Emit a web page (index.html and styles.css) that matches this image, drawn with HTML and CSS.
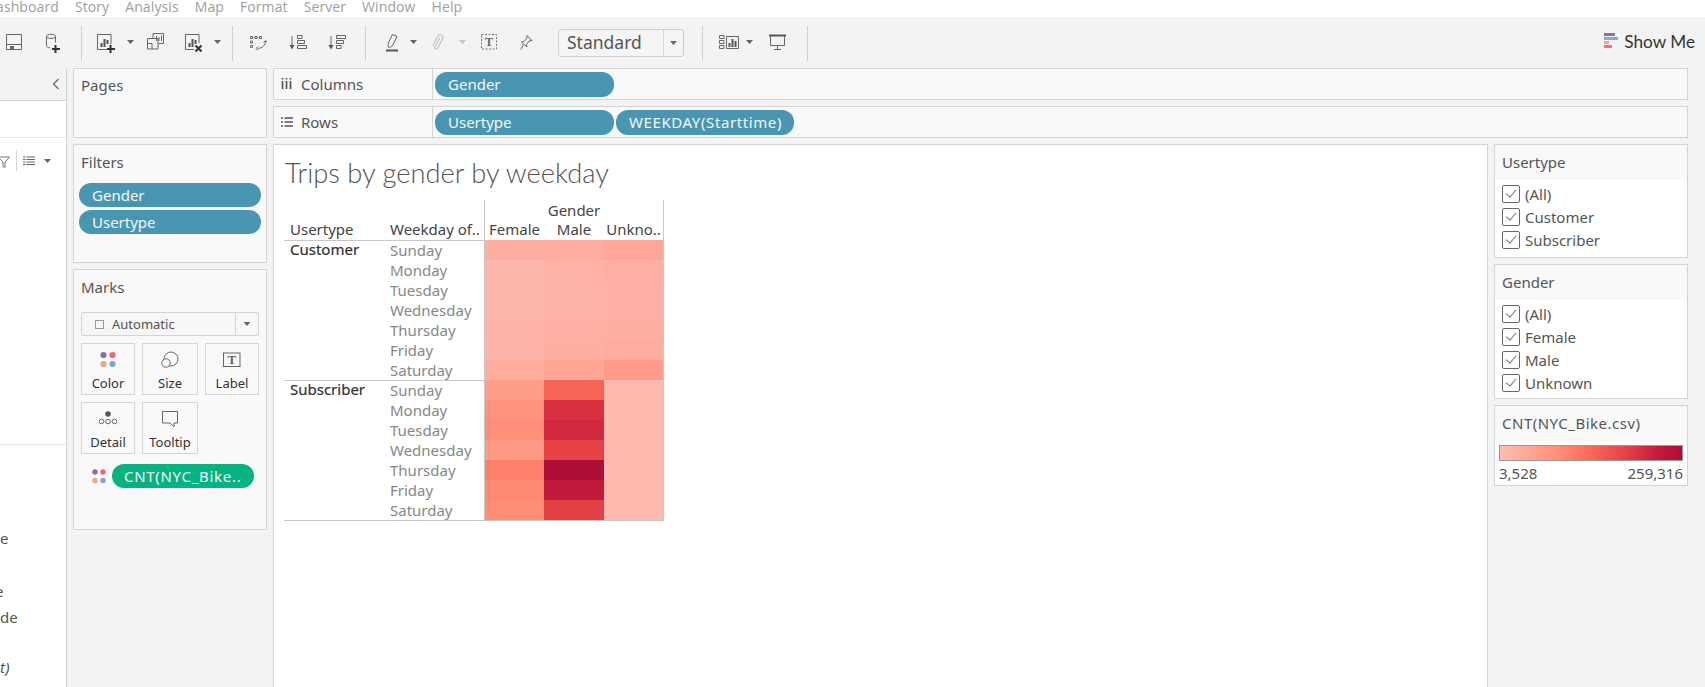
FILE: index.html
```html
<!DOCTYPE html>
<html lang="en">
<head>
<meta charset="utf-8">
<title>Trips by gender by weekday</title>
<link rel="stylesheet" href="styles.css">
</head>
<body>
<nav class="menu">
  <span class="m-dash">ashboard</span><span>Story</span><span>Analysis</span><span>Map</span><span>Format</span><span>Server</span><span>Window</span><span>Help</span>
</nav>
<header class="toolbar">
  <svg class="t-save" width="16" height="24" viewBox="0 0 16 24"><path d="M.5 4.500h15v15H.5zM.5 14.500h15" class="s"/><rect x="4" y="16" width="4" height="3.500" fill="#666"/></svg>
  <svg class="t-data" width="14" height="24" viewBox="0 0 14 24"><path d="M.5 6.500c0-3 9-3 9 0v6M.5 6.500c0 2.600 9 2.600 9 0M.5 6.500v9c0 1.600 2 2.200 3.500 2.400" class="s"/><path d="M9.500 15v8M6 19h8" class="p"/></svg>
  <i class="sep t-m21"></i>
  <svg class="t-new" width="18" height="24" viewBox="0 0 18 24"><path d="M10 19.500H.5v-15h13.500V14" class="s"/><path d="M4.500 17v-4M7.500 17V9M10.500 14v-4" class="b"/><path d="M13.500 15v8M10 19h8" class="p"/></svg>
  <i class="caret t-m12"></i>
  <svg class="t-dup" width="17" height="24" viewBox="0 0 17 24"><path d="M.5 8.500h10.500v10.500H.5zM.5 13.500h4.500v5.500M6 8V3.500h10.500v10h-5" class="s"/><path d="M9.500 11V6M12 11V7M14.500 11V5.500" class="s"/></svg>
  <svg class="t-clear" width="19" height="24" viewBox="0 0 19 24"><path d="M10 19.500H1.500v-15h13.500V13" class="s"/><path d="M5.500 17v-4M8.500 17V9M11.500 14v-4" class="b"/><path d="M11.500 15.500l6 6M17.500 15.500l-6 6" class="p"/></svg>
  <i class="caret t-m11"></i>
  <i class="sep t-m11"></i>
  <svg class="t-swap" width="17" height="24" viewBox="0 0 17 24"><path d="M.5 6.500h2v2h-2zM5 6.500h2v2H5zM9.500 6.500h2v2h-2zM.5 11h2v2h-2zM.5 15.500h2v2h-2z" class="s"/><path d="M15.500 11c0 4-3 7-7.500 7.500M13.500 12.500l2-2 1.500 2M8 16.500l-2 2 2 1.500" class="s"/></svg>
  <svg class="t-sorta" width="18" height="24" viewBox="0 0 18 24"><path d="M3 6v12" class="s"/><path d="M.5 15h5L3 19.500z" fill="#555"/><path d="M8.500 5.500h4.500v3H8.500zM8.500 10.500h7v3h-7zM8.500 15.500h9v3h-9z" class="s"/></svg>
  <svg class="t-sortd" width="18" height="24" viewBox="0 0 18 24"><path d="M3 6v12" class="s"/><path d="M.5 15h5L3 19.500z" fill="#555"/><path d="M8.500 5.500h9v3h-9zM8.500 10.500h7v3h-7zM8.500 15.500h4.500v3H8.500z" class="s"/></svg>
  <i class="sep t-m19"></i>
  <svg class="t-high" width="13" height="24" viewBox="0 0 13 24"><path d="M6.500 4.500l4.500 2-4.500 9-3 2-1.500-.8.300-3.500z" class="s"/><path d="M0 20.500h12" stroke="#555" stroke-width="2"/></svg>
  <i class="caret t-m11"></i>
  <svg class="t-clip" width="13" height="24" viewBox="0 0 13 24"><path d="M9 7.500l-5 9c-1 2 1.500 3.500 2.700 1.600l4.800-9c1.800-3.500-3-6-4.800-2.600l-5 9.200" fill="none" stroke="#c6c6c6" stroke-width="1.300"/></svg>
  <i class="caret caret-off t-m15"></i>
  <svg class="t-text" width="16" height="24" viewBox="0 0 16 24"><rect x=".5" y="4.500" width="15" height="14.500" fill="none" stroke="#777" stroke-dasharray="2 1.500"/><text x="8" y="16" class="tt">T</text></svg>
  <svg class="t-pin" width="13" height="24" viewBox="0 0 13 24"><path d="M7 5.500l5 5-3 .5-2.500 3.500.5 2.500-5.500-5 2.500-.5 3-3.500zM3.500 14.500L.8 19.500" class="s"/></svg>
  <div class="select"><span class="select-label">Standard</span><span class="select-arrow"><i class="caret"></i></span></div>
  <i class="sep t-m18"></i>
  <svg class="t-chart" width="20" height="24" viewBox="0 0 20 24"><path d="M.5 5.500h4.500v3H.5zM.5 10.500h4.500v3H.5zM.5 15.500h4.500v3H.5zM7.500 6.500h12v12h-12z" class="s"/><path d="M10.500 17v-4M13.500 17V9M16.500 17v-6" class="b"/></svg>
  <i class="caret t-m7"></i>
  <svg class="t-pres" width="17" height="24" viewBox="0 0 17 24"><path d="M0 5.500h17" stroke="#555" stroke-width="2"/><path d="M1.500 6v9.500h14V6M8.500 15.500v3.500M5 19.500h7" class="s"/></svg>
  <i class="sep t-m21"></i>
  <div class="showme">
    <svg width="14" height="16" viewBox="0 0 14 16"><rect width="11" height="3" fill="#8a7199"/><rect y="4" width="14" height="3" fill="#8aa9d0"/><rect y="8" width="5" height="3" fill="#f4a67c"/><rect y="12" width="8" height="3" fill="#f4707f"/></svg>
    <span>Show Me</span>
  </div>
</header>
<main class="main">
  <aside class="data">
    <div class="data-head"><svg width="8" height="12" viewBox="0 0 8 12"><path d="M6.500 1L1.500 6l5 5" fill="none" stroke="#666" stroke-width="1.200"/></svg></div>
    <div class="data-blank"></div>
    <div class="data-tools">
      <svg class="d-filter" width="10" height="12" viewBox="0 0 10 12"><path d="M-2 1h11.500L5 6v5.500L3 10.500V6z" fill="none" stroke="#777"/></svg>
      <i class="d-sep"></i>
      <svg class="d-list" width="12" height="10" viewBox="0 0 12 10"><path d="M0 1h2.500M3.500 1H12M0 3.500h2.500M3.500 3.500H12M0 6h2.500M3.500 6H12M0 8.500h2.500M3.500 8.500H12" stroke="#666"/></svg>
      <i class="caret d-caret"></i>
    </div>
    <div class="data-lower">
      <div class="frag frag-1">e</div>
      <div class="frag frag-2"><span>e</span></div>
      <div class="frag frag-3">de</div>
      <div class="frag frag-4">t)</div>
    </div>
  </aside>
  <section class="shelves">
    <div class="card pages"><h2 class="card-title">Pages</h2></div>
    <div class="card filters">
      <h2 class="card-title">Filters</h2>
      <div class="pill pill-wide">Gender</div>
      <div class="pill pill-wide">Usertype</div>
    </div>
    <div class="card marks">
      <h2 class="card-title">Marks</h2>
      <div class="marks-select"><span class="auto"><i class="auto-box"></i>Automatic</span><span class="marks-arrow"><i class="caret"></i></span></div>
      <div class="marks-grid">
        <div class="mark"><svg width="20" height="20" viewBox="0 0 20 20"><circle cx="5.500" cy="5" r="3.100" fill="#86709d"/><circle cx="14.500" cy="5" r="3.100" fill="#f2657d"/><circle cx="5.500" cy="14" r="3.100" fill="#f3a67e"/><circle cx="14.500" cy="14" r="3.100" fill="#7ea4d2"/></svg><span>Color</span></div>
        <div class="mark"><svg width="20" height="20" viewBox="0 0 20 20"><circle cx="11" cy="9" r="7" fill="none" stroke="#666"/><circle cx="6" cy="13" r="4.200" fill="#fafafa" stroke="#666"/></svg><span>Size</span></div>
        <div class="mark"><svg width="20" height="20" viewBox="0 0 20 20"><rect x="1.500" y="3" width="16.500" height="13.500" fill="none" stroke="#666"/><text x="9.750" y="14" class="tt tt-b">T</text></svg><span>Label</span></div>
        <div class="mark"><svg width="20" height="20" viewBox="0 0 20 20"><circle cx="10" cy="5" r="2.800" fill="#555"/><circle cx="3.500" cy="12.500" r="2.300" fill="none" stroke="#666"/><circle cx="10" cy="12.500" r="2.300" fill="none" stroke="#666"/><circle cx="16.500" cy="12.500" r="2.300" fill="none" stroke="#666"/></svg><span>Detail</span></div>
        <div class="mark"><svg width="20" height="20" viewBox="0 0 20 20"><path d="M2.500 2.500h15v11.500h-3.500v4l-4-4h-7.500z" fill="none" stroke="#666" stroke-linejoin="round"/></svg><span>Tooltip</span></div>
      </div>
      <div class="mark-pill-row">
        <svg width="15" height="15" viewBox="0 0 15 15"><circle cx="3" cy="3" r="2.700" fill="#86709d"/><circle cx="11" cy="3" r="2.700" fill="#f2657d"/><circle cx="3" cy="11.500" r="2.700" fill="#f3a67e"/><circle cx="11" cy="11.500" r="2.700" fill="#7ea4d2"/></svg>
        <div class="pill pill-green">CNT(NYC_Bike..</div>
      </div>
    </div>
  </section>
  <section class="work">
    <div class="card shelf">
      <div class="shelf-label"><svg width="12" height="12" viewBox="0 0 12 12"><path d="M1.500 3v8M5.500 3v8M9.500 3v8" stroke="#555" stroke-width="1.700"/><path d="M1.500 0v1.500M5.500 0v1.500M9.500 0v1.500" stroke="#555" stroke-width="1.700"/></svg><span>Columns</span></div>
      <div class="pill pill-shelf">Gender</div>
    </div>
    <div class="card shelf">
      <div class="shelf-label"><svg width="12" height="12" viewBox="0 0 12 12"><path d="M0 2h2M3.500 2H12M0 6h2M3.500 6H12M0 10h2M3.500 10H12" stroke="#555" stroke-width="1.500"/></svg><span>Rows</span></div>
      <div class="pill pill-shelf">Usertype</div>
      <div class="pill pill-shelf pill-caps">WEEKDAY(Starttime)</div>
    </div>
    <div class="work-lower">
      <div class="viz">
        <h1 class="viz-title">Trips by gender by weekday</h1>
        <div class="table">
          <div class="th"></div><div class="th"></div><div class="th th-gender">Gender</div>
          <div class="th th-line">Usertype</div><div class="th th-line">Weekday of..</div><div class="th th-row ctr vl">Female</div><div class="th th-row ctr">Male</div><div class="th th-row ctr vr">Unkno..</div>

          <div class="group">Customer</div>
          <div class="day day-first">Sunday</div><div class="c vl c1"></div><div class="c c2"></div><div class="c vr c3"></div>
          <div class="day">Monday</div><div class="c vl c4"></div><div class="c c5"></div><div class="c vr c6"></div>
          <div class="day">Tuesday</div><div class="c vl c4"></div><div class="c c5"></div><div class="c vr c7"></div>
          <div class="day">Wednesday</div><div class="c vl c4"></div><div class="c c8"></div><div class="c vr c7"></div>
          <div class="day">Thursday</div><div class="c vl c8"></div><div class="c c6"></div><div class="c vr c1"></div>
          <div class="day">Friday</div><div class="c vl c9"></div><div class="c c1"></div><div class="c vr c2"></div>
          <div class="day">Saturday</div><div class="c vl c10"></div><div class="c c11"></div><div class="c vr c12"></div>

          <div class="group">Subscriber</div>
          <div class="day day-first">Sunday</div><div class="c vl c13"></div><div class="c c14"></div><div class="c vr c15"></div>
          <div class="day">Monday</div><div class="c vl c16"></div><div class="c c17"></div><div class="c vr c15"></div>
          <div class="day">Tuesday</div><div class="c vl c18"></div><div class="c c19"></div><div class="c vr c15"></div>
          <div class="day">Wednesday</div><div class="c vl c20"></div><div class="c c21"></div><div class="c vr c15"></div>
          <div class="day">Thursday</div><div class="c vl c22"></div><div class="c c23"></div><div class="c vr c15"></div>
          <div class="day">Friday</div><div class="c vl c24"></div><div class="c c25"></div><div class="c vr c15"></div>
          <div class="day">Saturday</div><div class="c vl c26"></div><div class="c c27"></div><div class="c vr c15"></div>
        </div>
      </div>
      <aside class="legends">
        <div class="card qf qf-user">
          <h2 class="qf-title">Usertype</h2>
          <ul class="qf-list">
            <li><i class="check"></i>(All)</li>
            <li><i class="check"></i>Customer</li>
            <li><i class="check"></i>Subscriber</li>
          </ul>
        </div>
        <div class="card qf qf-gender">
          <h2 class="qf-title">Gender</h2>
          <ul class="qf-list">
            <li><i class="check"></i>(All)</li>
            <li><i class="check"></i>Female</li>
            <li><i class="check"></i>Male</li>
            <li><i class="check"></i>Unknown</li>
          </ul>
        </div>
        <div class="card qf qf-legend">
          <h2 class="qf-title qf-caps">CNT(NYC_Bike.csv)</h2>
          <div class="legend-body">
            <div class="ramp"></div>
            <div class="ramp-labels"><span>3,528</span><span>259,316</span></div>
          </div>
        </div>
      </aside>
    </div>
  </section>
</main>
</body>
</html>
```
FILE: styles.css
```css
* { box-sizing: border-box; }
html, body { margin: 0; height: 687px; overflow: hidden; }
body { background: #f3f3f3; font-family: "Noto Sans", "Liberation Sans", sans-serif; font-size: 15px; color: #555; }
i { display: block; font-style: normal; }
h1, h2, ul { margin: 0; padding: 0; font-weight: 400; }
ul { list-style: none; }

/* menu */
.menu { height: 17px; background: #fff; display: flex; gap: 16px; overflow: hidden; font-family: "Open Sans", sans-serif; font-size: 14px; line-height: 13px; letter-spacing: .1px; color: #a0a0a0; white-space: nowrap; }
.m-dash { margin-left: -4px; }

/* toolbar */
.toolbar { height: 51px; background: #f3f3f3; display: flex; align-items: flex-start; padding-top: 13px; padding-right: 10px; }
.toolbar svg { flex: none; display: block; }
.s { fill: none; stroke: #666; stroke-width: 1; }
.b { fill: none; stroke: #555; stroke-width: 2; }
.p { fill: none; stroke: #333; stroke-width: 2; }
.tt { font-family: "Liberation Serif", serif; font-size: 12px; font-weight: 700; fill: #666; text-anchor: middle; }
.tt-b { font-size: 13px; }
.sep { flex: none; width: 1px; height: 35px; background: #cfcfcf; margin-top: -4px; }
.caret { flex: none; width: 7px; height: 4px; background: #666; clip-path: polygon(0 0, 100% 0, 50% 100%); }
.toolbar > .caret { margin-top: 10px; }
.caret-off { background: #c6c6c6; }
.t-save { margin-left: 6px; } .t-data { margin-left: 24px; }
.t-new { margin-left: 15px; } .t-dup { margin-left: 13px; }
.t-clear { margin-left: 20px; } .t-swap { margin-left: 17px; }
.t-sorta { margin-left: 22px; } .t-sortd { margin-left: 21px; }
.t-high { margin-left: 20px; } .t-clip { margin-left: 14px; }
.t-text { margin-left: 15px; } .t-pin { margin-left: 23px; }
.t-chart { margin-left: 16px; } .t-pres { margin-left: 16px; }
.t-m7 { margin-left: 7px; } .t-m11 { margin-left: 11px; } .t-m12 { margin-left: 12px; }
.t-m15 { margin-left: 15px; } .t-m18 { margin-left: 18px; } .t-m19 { margin-left: 19px; }
.t-m21 { margin-left: 21px; }
.select { flex: none; margin: -1px 0 0 25px; width: 126px; height: 28px; border: 1px solid #cfcfcf; border-radius: 3px; background: #f5f5f5; display: flex; align-items: stretch; font-size: 17.5px; color: #555; }
.select-label { width: 105px; padding-left: 8px; line-height: 24px; border-right: 1px solid #d8d8d8; }
.select-arrow { flex: 1; display: flex; align-items: center; justify-content: center; }
.showme { margin-left: auto; margin-top: -1px; display: flex; align-items: center; gap: 6px; height: 24px; font-family: Lato, sans-serif; font-size: 17.2px; color: #333; }

/* main */
.main { height: 619px; display: flex; align-items: stretch; }
.data { flex: none; width: 67px; background: #fff; border-right: 1px solid #cfcfcf; overflow: hidden; }
.data-head { height: 33px; background: #f3f3f3; border-bottom: 1px solid #d4d4d4; display: flex; align-items: center; justify-content: flex-end; padding-right: 6px; }
.data-blank { height: 37px; border-bottom: 1px solid #e6e6e6; }
.data-tools { height: 307px; border-bottom: 1px solid #e6e6e6; display: flex; align-items: flex-start; padding-top: 17px; }
.data-tools svg { display: block; }
.d-filter { margin-top: 1px; }
.d-sep { width: 1px; height: 21px; background: #d4d4d4; margin: -5px 0 0 6px; }
.d-list { margin: 1px 0 0 6px; }
.d-caret { margin: 4px 0 0 9px; }
.data-lower { color: #555; font-size: 15px; line-height: 20px; }
.frag { height: 20px; overflow: hidden; white-space: nowrap; }
.frag-1 { margin-top: 83px; }
.frag-2 { margin-top: 33px; }
.frag-2 span { margin-left: -5px; }
.frag-3 { margin-top: 6px; }
.frag-4 { margin-top: 30px; font-style: italic; }

.card { background: #f9f9f9; border: 1px solid #d4d4d4; }
.card-title { font-size: 15px; line-height: 20px; color: #555; padding: 6px 0 0 7px; }
.shelves { flex: none; width: 194px; margin-left: 6px; display: flex; flex-direction: column; gap: 6px; }
.pages { height: 70px; }
.filters { height: 119px; padding: 0 5px; }
.filters .card-title { padding: 7px 0 11px 2px; }
.marks { height: 261px; padding: 0 7px; }
.marks .card-title { padding: 7px 0 15px 0; }
.pill { height: 24px; border-radius: 12px; background: #4996b2; color: #f4f8fa; font-size: 15px; line-height: 24px; padding-left: 13px; white-space: nowrap; flex: none; }
.pill-wide { margin-bottom: 3px; }
.marks-select { height: 24px; border: 1px solid #d4d4d4; border-radius: 2px; background: #f6f6f6; display: flex; font-size: 13px; color: #555; }
.auto { width: 154px; border-right: 1px solid #d4d4d4; display: flex; align-items: center; padding-left: 13px; }
.auto-box { width: 9px; height: 9px; border: 1px solid #999; margin-right: 8px; }
.marks-arrow { flex: 1; display: flex; align-items: center; justify-content: center; }
.marks-grid { margin-top: 7px; display: grid; grid-template-columns: 54px 56px 54px; grid-auto-rows: 52px; gap: 7px; }
.mark { border: 1px solid #d4d4d4; display: flex; flex-direction: column; align-items: center; font-size: 13px; color: #333; padding-top: 6px; }
.mark svg { display: block; }
.mark span { margin-top: 5px; line-height: 16px; }
.mark-pill-row { margin-top: 10px; padding-left: 11px; display: flex; align-items: center; }
.mark-pill-row svg { display: block; }
.pill-green { width: 142px; margin-left: 5px; background: #05b280; padding-left: 12px; letter-spacing: .7px; }

.work { flex: none; width: 1415px; margin-left: 6px; display: flex; flex-direction: column; gap: 6px; }
.shelf { height: 32px; display: flex; align-items: center; }
.shelf-label { flex: none; width: 159px; height: 100%; border-right: 1px solid #d4d4d4; display: flex; align-items: center; gap: 8px; padding-left: 7px; color: #555; }
.shelf-label svg { display: block; }
.pill-shelf { width: 179px; height: 25px; margin-left: 2px; line-height: 24px; }
.pill-caps { width: 178px; letter-spacing: .6px; }
.work-lower { flex: 1; min-height: 0; display: flex; gap: 6px; }
.viz { flex: none; width: 1215px; background: #fff; border: 1px solid #d4d4d4; border-bottom: 0; padding: 0 0 0 10px; }
.viz-title { font-family: Lato, sans-serif; font-size: 27.3px; font-weight: 300; color: #555; line-height: 34px; height: 55px; padding: 11px 0 0 1px; }
.table { width: 380px; display: grid; grid-template-columns: 100px 100px 60px 60px 60px; grid-auto-rows: 20px; border-bottom: 1px solid #c8c8c8; font-size: 15px; line-height: 20px; }
.th { color: #444; white-space: nowrap; }
.th-gender { grid-column: span 3; text-align: center; border-left: 1px solid #c8c8c8; border-right: 1px solid #c8c8c8; }
.th-line { padding-left: 6px; line-height: 18px; }
.th-row { line-height: 18px; }
.ctr { text-align: center; }
.vl { border-left: 1px solid #c8c8c8; }
.vr { border-right: 1px solid #c8c8c8; }
.group { grid-row: span 7; grid-column: 1; border-top: 1px solid #c8c8c8; padding-left: 6px; line-height: 17px; color: #333; -webkit-text-stroke: .2px #333; }
.day { grid-column: 2; padding-left: 6px; color: #888; white-space: nowrap; }
.day-first { border-top: 1px solid #c8c8c8; line-height: 19px; }
.c1 { background: #ffaea2; } .c2 { background: #ffaca0; } .c3 { background: #ffa698; }
.c4 { background: #ffb6ab; } .c5 { background: #ffb2a6; } .c6 { background: #ffafa3; }
.c7 { background: #ffb1a5; } .c8 { background: #ffb3a7; } .c9 { background: #ffb4a9; }
.c10 { background: #ffab9e; } .c11 { background: #ffa596; } .c12 { background: #ff9b8a; }
.c13 { background: #ff9d8b; } .c14 { background: #f56455; } .c15 { background: #ffbaaf; }
.c16 { background: #ff927c; } .c17 { background: #d92f40; } .c18 { background: #ff8f78; }
.c19 { background: #d2283d; } .c20 { background: #ff9a86; } .c21 { background: #e64347; }
.c22 { background: #ff816c; } .c23 { background: #ad0e37; } .c24 { background: #ff8972; }
.c25 { background: #c11a3b; } .c26 { background: #ff8d76; } .c27 { background: #e34045; }

.legends { flex: none; width: 194px; display: flex; flex-direction: column; gap: 6px; }
.qf-title { height: 35px; background: #f9f9f9; padding: 7px 0 0 7px; font-size: 15px; line-height: 20px; color: #555; }
.qf-caps { letter-spacing: .5px; }
.qf { background: #fff; }
.qf-user { height: 114px; }
.qf-gender { height: 135px; }
.qf-legend { height: 81px; }
.qf-list { padding: 2px 0 0 7px; }
.qf-list li { height: 23px; display: flex; align-items: center; gap: 5px; font-size: 15px; color: #555; }
.check { width: 18px; height: 18px; border: 1px solid #666; border-radius: 2px; position: relative; background: #fff; }
.check::after { content: ""; position: absolute; left: 5px; top: 1px; width: 5px; height: 9px; border-right: 1.500px solid #777; border-bottom: 1.500px solid #777; transform: rotate(40deg); }
.legend-body { padding: 4px 4px 0 4px; }
.ramp { height: 16px; border: 1px solid #999; background: linear-gradient(90deg, #ffbeb2 0%, #ff8c75 33%, #f66a58 50%, #e6434a 68%, #c11a3b 88%, #ad0e37 100%); }
.ramp-labels { display: flex; justify-content: space-between; font-size: 15px; line-height: 20px; margin-top: 2px; color: #555; }
```
